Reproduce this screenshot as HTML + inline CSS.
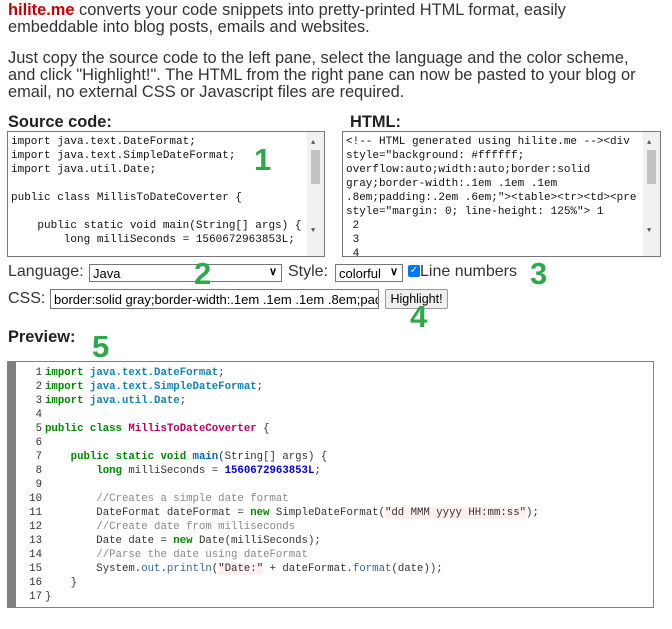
<!DOCTYPE html>
<html><head><meta charset="utf-8"><style>
*{margin:0;padding:0;box-sizing:border-box}
body{width:672px;height:629px;background:#fff;font-family:"Liberation Sans",sans-serif;color:#333;position:relative;overflow:hidden}
.a{position:absolute;white-space:nowrap}
p{position:absolute;left:8px;font-size:16.4px;line-height:17px;color:#333;white-space:nowrap}
.lbl{font-weight:bold;font-size:16.4px;color:#222}
.ta{position:absolute;border:1px solid #767676;background:#fff;font-family:"Liberation Mono",monospace;font-size:11px;line-height:14px;color:#111;overflow:hidden;padding:3px 0 0 3px;white-space:pre}
.sb{position:absolute;right:0;top:0;width:17px;height:100%;background:#f1f1f1}
.sb i{position:absolute;left:4px;top:18px;width:9px;height:34px;background:#c1c1c1}
.sb s{position:absolute;left:4px;font-size:7px;color:#555;text-decoration:none}
.g{position:absolute;color:#2da84a;font-weight:bold;font-size:31px;font-family:"Liberation Sans",sans-serif}
.sel{position:absolute;border:1px solid #767676;font-size:13px;padding:1px 3px;color:#000;background:#fff}
.sel b{position:absolute;right:4px;top:0px;font-weight:bold;font-size:11px}
.t{font-size:16px}
.code{position:absolute;left:7px;top:361px;width:647px;height:247px;border:1px solid #808080;border-left:9px solid #808080;font-family:"Liberation Mono",monospace;font-size:10.7px;line-height:14px;color:#333;white-space:pre;padding-top:4px}
.ln{position:absolute;left:0;top:4px;width:26px;text-align:right}
.c{position:absolute;left:29px;top:4px}
.k{color:#080;font-weight:bold}.n{color:#0e84b5;font-weight:bold}.cl{color:#b06;font-weight:bold}
.f{color:#06b;font-weight:bold}.num{color:#00d;font-weight:bold}.cm{color:#888}.s{background:#fff0f0;color:#333}.o{color:#369}
</style></head><body>
<p style="top:2px"><b style="color:#c00">hilite.me</b> converts your code snippets into pretty-printed HTML format, easily<br>embeddable into blog posts, emails and websites.</p>
<p style="top:50px">Just copy the source code to the left pane, select the language and the color scheme,<br>and click "Highlight!". The HTML from the right pane can now be pasted to your blog or<br>email, no external CSS or Javascript files are required.</p>
<div class="a lbl" style="left:8px;top:113px">Source code:</div>
<div class="a lbl" style="left:350px;top:113px">HTML:</div>
<div class="ta" style="left:7px;top:131px;width:318px;height:126px">import java.text.DateFormat;
import java.text.SimpleDateFormat;
import java.util.Date;

public class MillisToDateCoverter {

    public static void main(String[] args) {
        long milliSeconds = 1560672963853L;<div class="sb"><s style="top:4px">▲</s><i></i><s style="top:92px">▼</s></div></div>
<div class="ta" style="left:342px;top:131px;width:319px;height:126px">&lt;!-- HTML generated using hilite.me --&gt;&lt;div
style="background: #ffffff;
overflow:auto;width:auto;border:solid
gray;border-width:.1em .1em .1em
.8em;padding:.2em .6em;"&gt;&lt;table&gt;&lt;tr&gt;&lt;td&gt;&lt;pre
style="margin: 0; line-height: 125%"&gt; 1
 2
 3
 4<div class="sb"><s style="top:4px">▲</s><i></i><s style="top:92px">▼</s></div></div>
<div class="a t" style="left:8px;top:263px">Language:</div>
<div class="sel" style="left:89px;top:264px;width:193px;height:18px">Java<b>&#x2228;</b></div>
<div class="a t" style="left:288px;top:263px">Style:</div>
<div class="sel" style="left:335px;top:264px;width:68px;height:18px">colorful<b>&#x2228;</b></div>
<div class="a" style="left:408px;top:265px;width:12px;height:12px;background:#0075ff;border-radius:2px;color:#fff;font-size:10px;line-height:12px;text-align:center">✓</div>
<div class="a t" style="left:420px;top:263px">Line numbers</div>
<div class="a t" style="left:8px;top:290px">CSS:</div>
<div class="a" style="left:50px;top:289px;width:329px;height:20px;border:1px solid #767676;font-size:13px;padding:2px 3px;overflow:hidden;color:#000">border:solid gray;border-width:.1em .1em .1em .8em;padding:.2em .6em;</div>
<div class="a" style="left:385px;top:289px;width:63px;height:20px;border:1px solid #999;border-radius:2px;background:#efefef;font-size:12.5px;text-align:center;line-height:18px;color:#000">Highlight!</div>
<div class="a lbl" style="left:8px;top:328px">Preview:</div>
<div class="g" style="left:254px;top:142px">1</div>
<div class="g" style="left:194px;top:256px">2</div>
<div class="g" style="left:530px;top:256px">3</div>
<div class="g" style="left:410px;top:299px">4</div>
<div class="g" style="left:92px;top:329px">5</div>
<div class="code"><div class="ln"> 1
 2
 3
 4
 5
 6
 7
 8
 9
10
11
12
13
14
15
16
17</div><div class="c"><span class="k">import</span> <span class="n">java.text.DateFormat</span>;
<span class="k">import</span> <span class="n">java.text.SimpleDateFormat</span>;
<span class="k">import</span> <span class="n">java.util.Date</span>;

<span class="k">public</span> <span class="k">class</span> <span class="cl">MillisToDateCoverter</span> {

    <span class="k">public</span> <span class="k">static</span> <span class="k">void</span> <span class="f">main</span>(String[] args) {
        <span class="k">long</span> milliSeconds = <span class="num">1560672963853L</span>;

        <span class="cm">//Creates a simple date format</span>
        DateFormat dateFormat = <span class="k">new</span> SimpleDateFormat(<span class="s">"dd MMM yyyy HH:mm:ss"</span>);
        <span class="cm">//Create date from milliseconds</span>
        Date date = <span class="k">new</span> Date(milliSeconds);
        <span class="cm">//Parse the date using dateFormat</span>
        System.<span class="o">out</span>.<span class="o">println</span>(<span class="s">"Date:"</span> + dateFormat.<span class="o">format</span>(date));
    }
}</div></div>
</body></html>
